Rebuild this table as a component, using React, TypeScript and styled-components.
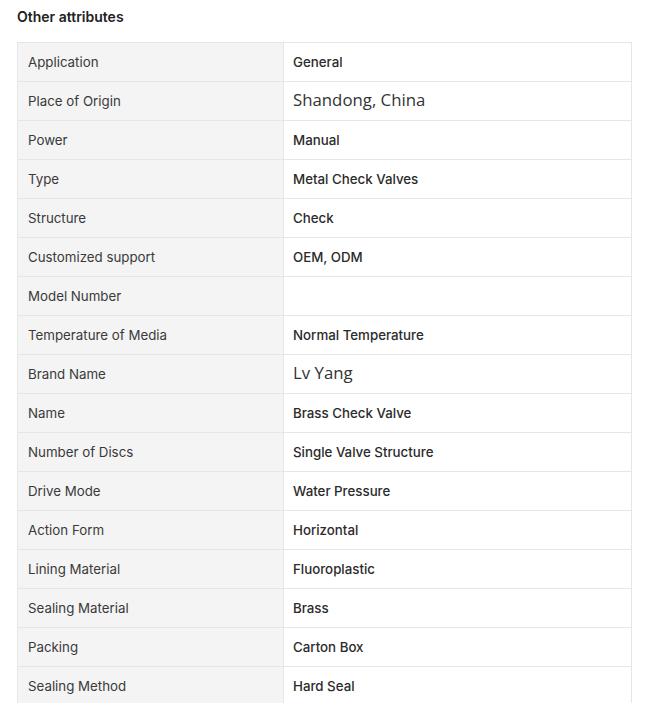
import React from "react";
import styled, { createGlobalStyle } from "styled-components";

const Global = createGlobalStyle`
  html, body { margin: 0; padding: 0; background: #fff; }
  body { font-family: Inter, "Noto Sans", sans-serif; color: #222; }
  *, *::before, *::after { box-sizing: border-box; }
`;

const Page = styled.div`
  padding: 7px 18px 0 17px;
`;

const Title = styled.h3`
  margin: 0 0 15px 0;
  font-size: 14px;
  line-height: 20px;
  font-weight: 600;
  color: #222;
`;

const Table = styled.div`
  width: 615px;
  border-top: 1px solid #e6e6e6;
  border-left: 1px solid #e6e6e6;
  border-right: 1px solid #e6e6e6;
`;

const Row = styled.div`
  display: grid;
  grid-template-columns: 266px 1fr;
  height: 39px;
  border-bottom: 1px solid #e6e6e6;
`;

const Label = styled.div`
  display: flex;
  align-items: center;
  padding-left: 10px;
  background: #f4f4f4;
  border-right: 1px solid #e6e6e6;
  font-size: 13.3px;
  color: #3a3a3a;
`;

const Value = styled.div<{ $alt?: boolean }>`
  display: flex;
  align-items: center;
  padding-left: 9px;
  padding-bottom: ${(p) => (p.$alt ? "4px" : "0")};
  font-family: ${(p) => (p.$alt ? '"Open Sans", "Noto Sans", sans-serif' : 'Inter, "Noto Sans", sans-serif')};
  font-size: ${(p) => (p.$alt ? "16.8px" : "13.3px")};
  font-weight: ${(p) => (p.$alt ? 400 : 500)};
  color: ${(p) => (p.$alt ? "#333" : "#2b2b2b")};
`;

const rows: [string, string, boolean?][] = [
  ["Application", "General"],
  ["Place of Origin", "Shandong, China", true],
  ["Power", "Manual"],
  ["Type", "Metal Check Valves"],
  ["Structure", "Check"],
  ["Customized support", "OEM, ODM"],
  ["Model Number", ""],
  ["Temperature of Media", "Normal Temperature"],
  ["Brand Name", "Lv Yang", true],
  ["Name", "Brass Check Valve"],
  ["Number of Discs", "Single Valve Structure"],
  ["Drive Mode", "Water Pressure"],
  ["Action Form", "Horizontal"],
  ["Lining Material", "Fluoroplastic"],
  ["Sealing Material", "Brass"],
  ["Packing", "Carton Box"],
  ["Sealing Method", "Hard Seal"],
];

export default function App() {
  return (
    <>
      <Global />
      <Page>
        <Title>Other attributes</Title>
        <Table>
          {rows.map(([l, v, alt]) => (
            <Row key={l}>
              <Label>{l}</Label>
              <Value $alt={alt}>{v}</Value>
            </Row>
          ))}
        </Table>
      </Page>
    </>
  );
}
